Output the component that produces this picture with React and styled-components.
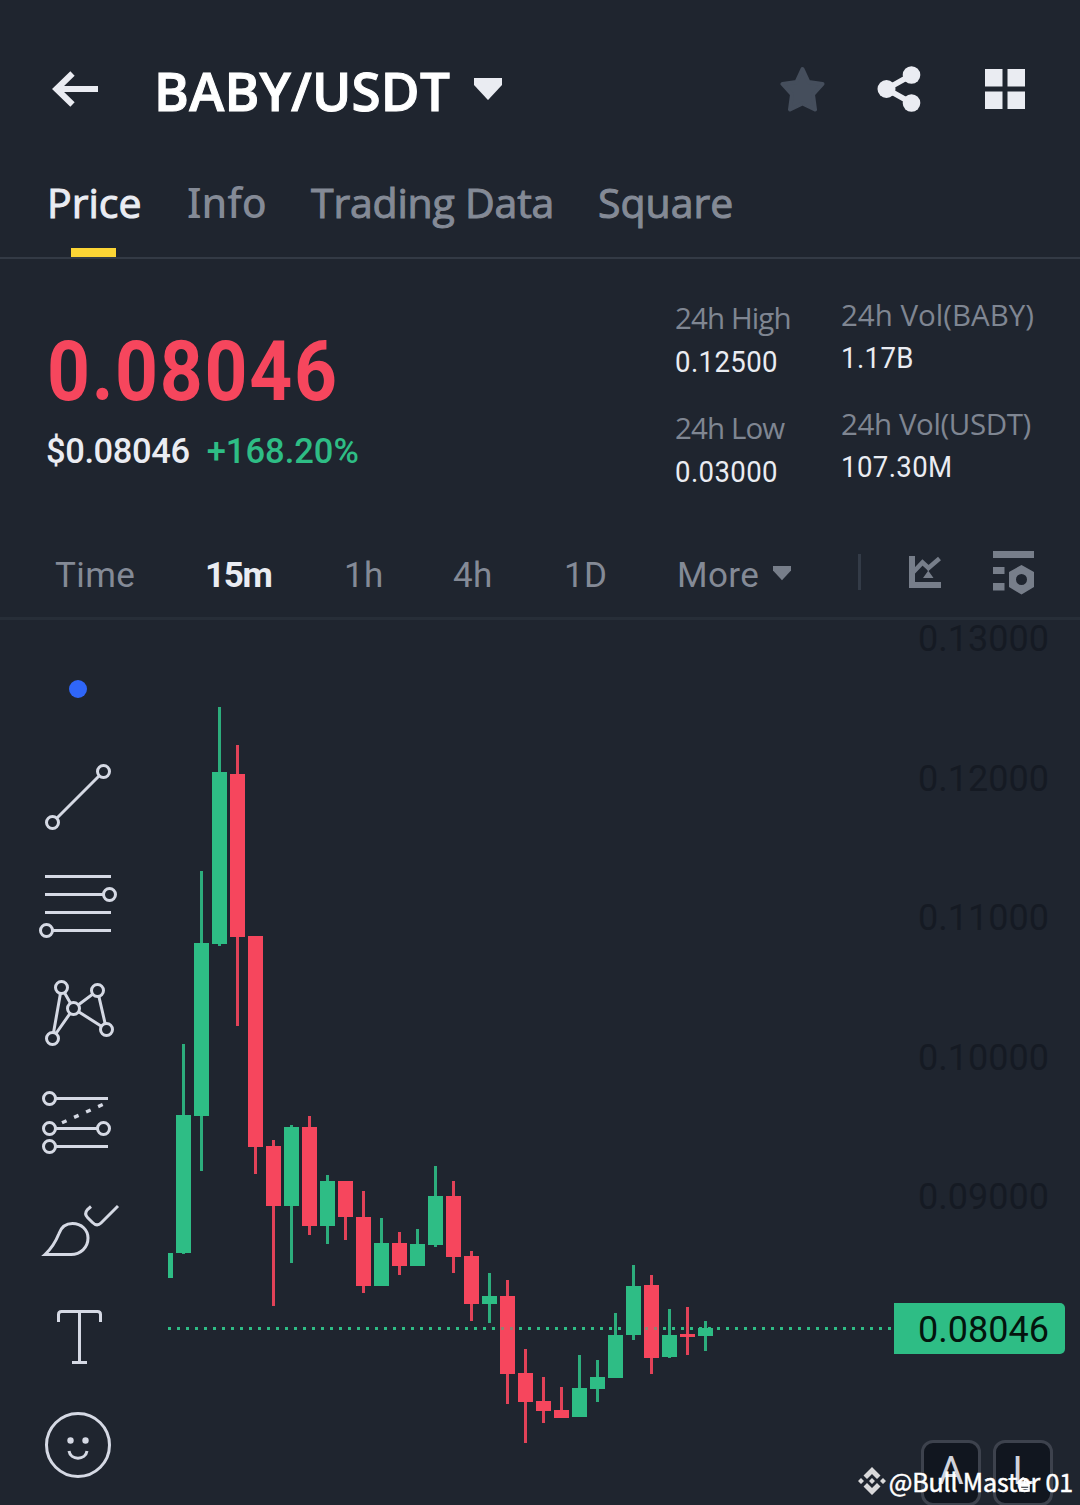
import React from "react";
import styled, { createGlobalStyle } from "styled-components";

const GlobalStyle = createGlobalStyle`
  * {
    box-sizing: border-box;
  }

  body {
    margin: 0;
    background: #1f252f;
  }
`

const Screen = styled.div`
  position: relative;
  display: flex;
  flex-direction: column;
  width: 1080px;
  height: 1505px;
  overflow: hidden;
  background: #1f252f;
  color: #eaecf2;
  font-family: Roboto, "Liberation Sans", sans-serif;
`

const Header = styled.header`
  display: flex;
  align-items: center;
  height: 178px;
  padding: 0 55px 0 52px;
`

const Title = styled.h1`
  width: 297px;
  margin: 0 23px 0 56px;
  padding-top: 3px;
  color: #fff;
  font-family: "Open Sans", "Noto Sans", sans-serif;
  font-size: 53px;
  font-weight: 600;
  line-height: 80px;
  letter-spacing: 0.2px;
  -webkit-text-stroke: 1px #fff;
  white-space: nowrap;
`

const HeaderActions = styled.div`
  display: flex;
  align-items: center;
  gap: 52px;
  margin-left: auto;
`

const Tabs = styled.nav`
  display: flex;
  height: 81px;
  padding-left: 47px;
  border-bottom: 2px solid #333a45;
`

const Tab = styled.div`
  display: flex;
  flex-direction: column;
  width: ${props => props.$width}px;
  color: ${props => props.$active ? '#eaecf2' : '#848a96'};
  font-family: ${props => props.$family || '"Open Sans"'}, "Noto Sans", sans-serif;
  font-size: 41px;
  font-weight: ${props => props.$family ? 500 : 400};
  line-height: 48px;
  letter-spacing: ${props => props.$spacing || 0}px;
  -webkit-text-stroke: ${props => props.$family ? 0 : 1}px;
  white-space: nowrap;
`

const TabMarker = styled.div`
  width: 45px;
  height: 9px;
  margin: 22px 0 0 24px;
  background: #fcd535;
`

const Summary = styled.section`
  display: flex;
  height: 271px;
`

const PriceBlock = styled.div`
  width: 675px;
  padding: 71px 0 0 46px;
`

const LastPrice = styled.div`
  padding-left: 1px;
  color: #f6465d;
  font-size: 84px;
  font-weight: 700;
  line-height: 84px;
  letter-spacing: 1.9px;
  transform: scaleX(0.893);
  transform-origin: left;
`

const PriceRow = styled.div`
  display: flex;
  gap: 17px;
  margin-top: 17px;
  font-size: 34.5px;
  font-weight: 500;
  line-height: 40px;
  letter-spacing: -0.4px;
`

const Change = styled.span`
  color: #2ebd85;
  letter-spacing: 0;
`

const StatColumn = styled.div`
  display: flex;
  flex-direction: column;
  gap: 22px;
  width: ${props => props.$width}px;
  padding-top: ${props => props.$top}px;
`

const StatLabel = styled.div`
  color: #7f8692;
  font-family: "Open Sans", "Noto Sans", sans-serif;
  font-size: 29.5px;
  line-height: 44px;
  letter-spacing: ${props => props.$spacing}px;
  white-space: nowrap;
`

const StatValue = styled.div`
  margin-top: ${props => props.$raise ? -1 : 0}px;
  font-size: 29.5px;
  line-height: 44px;
  letter-spacing: 0.4px;
  transform: scaleX(0.935);
  transform-origin: left;
`

const Intervals = styled.nav`
  display: flex;
  align-items: center;
  height: 90px;
  padding: 0 46px 0 55px;
  border-bottom: 3px solid #272e38;
`

const Interval = styled.div`
  width: ${props => props.$width}px;
  padding-top: 4px;
  color: ${props => props.$active ? '#eaecf2' : '#848a96'};
  font-size: 35px;
  font-weight: ${props => props.$active ? 700 : 400};
  line-height: 44px;
  letter-spacing: ${props => props.$active ? -1.3 : 0.4}px;
  white-space: nowrap;
`

const Divider = styled.div`
  width: 3px;
  height: 36px;
  margin: 0 48px 4px 67px;
  background: #333b47;
`

const ChartTools = styled.div`
  display: flex;
  gap: 52px;
  align-items: center;
  padding-bottom: 1px;
`

const ChartPanel = styled.main`
  display: flex;
  height: 885px;
`

const ToolColumn = styled.aside`
  display: flex;
  flex-direction: column;
  width: 168px;
  padding: 60px 0 0 36px;
`

const ActiveDot = styled.div`
  width: 18px;
  height: 18px;
  margin: 0 0 45px 33px;
  border-radius: 50%;
  background: #2f66f8;
`

const PriceAxis = styled.aside`
  display: flex;
  flex-direction: column;
  width: 186px;
`

const AxisLabel = styled.div`
  flex: none;
  height: 139.6px;
  padding-left: 24px;
  color: #151a23;
  font-size: 36px;
  line-height: 38px;
`

const PriceTag = styled.div`
  flex: none;
  width: 171px;
  height: 51px;
  margin-top: -15px;
  padding-left: 24px;
  border-radius: 0 5px 5px 0;
  background: #2ebd85;
  color: #04130d;
  font-size: 36px;
  line-height: 54px;
`

const ScaleButtons = styled.div`
  display: flex;
  flex: none;
  gap: 12px;
  margin: 86px 0 0 27px;
`

const ScaleButton = styled.div`
  width: 60px;
  height: 66px;
  border: 3px solid #3d424d;
  border-radius: 12px;
  background: #11161f;
  color: #d0d3dc;
  font-size: 39px;
  line-height: 57px;
  text-align: center;
`

const Watermark = styled.div`
  position: absolute;
  right: 7px;
  bottom: 4px;
  display: flex;
  align-items: center;
  gap: 3px;
  color: #fff;
  font-family: "Noto Sans CJK SC", "Noto Sans", sans-serif;
  font-size: 25px;
  line-height: 40px;
  letter-spacing: -0.15px;
  -webkit-text-stroke: 0.5px #fff;
  white-space: nowrap;
`

const WatermarkBadge = styled.svg`
  position: absolute;
  right: 41px;
  bottom: 9px;
`

const LINE = '#d5d9e4';

const tabs = [
  { label: 'Price', width: 140, active: true },
  { label: 'Info', width: 124, family: '"Noto Sans"' },
  { label: 'Trading Data', width: 287, spacing: -0.2 },
  { label: 'Square', width: 150 },
];

const intervals = [
  { label: 'Time', width: 150 },
  { label: '15m', width: 139, active: true },
  { label: '1h', width: 109 },
  { label: '4h', width: 111 },
  { label: '1D', width: 113 },
  { label: 'More', width: 96 },
];

const statColumns = [
  { width: 166, top: 37, items: [['24h High', '0.12500', -0.9], ['24h Low', '0.03000', -0.9]] },
  { width: 239, top: 34, raise: true, items: [['24h Vol(BABY)', '1.17B', 0], ['24h Vol(USDT)', '107.30M', -0.4]] },
];

const axis = ['0.13000', '0.12000', '0.11000', '0.10000', '0.09000'];

// [rising, high, body top, body bottom, low]
const candles = [
  [1, 1044, 1115, 1253, 1254],
  [1, 871, 943, 1116, 1171],
  [1, 707, 772, 944, 946],
  [0, 745, 774, 937, 1026],
  [0, 936, 936, 1147, 1174],
  [0, 1140, 1146, 1206, 1306],
  [1, 1125, 1127, 1206, 1263],
  [0, 1116, 1127, 1226, 1235],
  [1, 1175, 1181, 1226, 1244],
  [0, 1181, 1181, 1217, 1240],
  [0, 1191, 1217, 1286, 1293],
  [1, 1218, 1243, 1286, 1286],
  [0, 1232, 1243, 1266, 1275],
  [1, 1229, 1244, 1266, 1266],
  [1, 1166, 1196, 1245, 1247],
  [0, 1181, 1196, 1257, 1273],
  [0, 1251, 1256, 1304, 1321],
  [1, 1273, 1296, 1304, 1323],
  [0, 1280, 1296, 1374, 1404],
  [0, 1349, 1373, 1402, 1443],
  [0, 1377, 1401, 1411, 1423],
  [0, 1387, 1410, 1418, 1418],
  [1, 1355, 1388, 1417, 1417],
  [1, 1360, 1377, 1389, 1402],
  [1, 1313, 1335, 1378, 1378],
  [1, 1265, 1286, 1335, 1340],
  [0, 1275, 1285, 1358, 1374],
  [1, 1309, 1335, 1357, 1358],
  [0, 1307, 1334, 1337, 1355],
  [1, 1321, 1328, 1336, 1351],
];

const Caret = ({ size, color }) => (
  <svg width={size} height={size * 0.79} viewBox="0 0 28 22" fill={color}>
    <path d="M0 0H28V7L14 22L0 7Z" />
  </svg>
)

const Tool = ({ children }) => (
  <svg width="84" height="108" viewBox="0 0 84 108" fill="none" stroke={LINE} strokeWidth="3">
    {children}
  </svg>
)

const Knob = ({ x, y }) => <circle cx={x} cy={y} r="6" fill="#1f252f" />

const DrawingTools = () => (
  <ToolColumn>
    <ActiveDot />
    <Tool>
      <path d="M16.5 79.5L67.5 28.5" />
      <Knob x={16.5} y={79.5} />
      <Knob x={67.5} y={28.5} />
    </Tool>
    <Tool>
      <path d="M9 25.5H75M9 43.5H75M9 61.5H75M9 79.5H75" />
      <Knob x={73.5} y={43.5} />
      <Knob x={10.5} y={79.5} />
    </Tool>
    <Tool>
      <path d="M16.5 79.5L25.5 28.5L37.5 49.5L16.5 79.5M37.5 49.5L61.5 31.5L70.5 70.5L37.5 49.5" />
      <Knob x={25.5} y={28.5} />
      <Knob x={61.5} y={31.5} />
      <Knob x={37.5} y={49.5} />
      <Knob x={16.5} y={79.5} />
      <Knob x={70.5} y={70.5} />
    </Tool>
    <Tool>
      <path d="M13.5 31.5H72M13.5 61.5H67.5M13.5 79.5H72" />
      <path d="M26 55.8L67.5 37.2" strokeDasharray="5 8.2" strokeWidth="3.4" />
      <Knob x={13.5} y={31.5} />
      <Knob x={13.5} y={61.5} />
      <Knob x={67.5} y={61.5} />
      <Knob x={13.5} y={79.5} />
    </Tool>
    <Tool>
      <path d="M9 79.5C15 74 20 66 23 58.5C25.5 51.5 30 48.5 36.5 48.5C45.5 48.5 52 55 52 63C52 72.5 44.5 79.5 35 79.5Z" />
      <path d="M55 31.5L51.5 34.5C49 37.5 49 40 51.5 42.5L56.5 47.5C59.5 50.5 62.5 50.5 65 48L82 31" />
    </Tool>
    <Tool>
      <path d="M22.5 39V31.5Q22.5 28.5 25.5 28.5H61.5Q64.5 28.5 64.5 31.5V39M43.5 28.5V79M36 79.5H51" />
    </Tool>
    <Tool>
      <circle cx="42" cy="54" r="31.5" />
      <circle cx="34.5" cy="49.5" r="3.2" fill={LINE} stroke="none" />
      <circle cx="49.5" cy="49.5" r="3.2" fill={LINE} stroke="none" />
      <path d="M33 60C34.5 69.5 49.5 69.5 51 60" />
    </Tool>
  </ToolColumn>
)

const Candles = () => (
  <svg width="726" height="885" viewBox="168 620 726 885">
    <path d="M168 1328.5H894" stroke="#2ebd85" strokeWidth="3" strokeDasharray="3 6" />
    <rect x="168" y="1253" width="5" height="25" fill="#2ebd85" />
    {candles.map(([rising, high, top, bottom, low], index) => {
      const x = 176 + index * 18;
      return (
        <g key={index.toString()} fill={rising ? '#2ebd85' : '#f6465d'}>
          <rect x={x + 6} y={high} width="3" height={low - high} opacity="0.9" />
          <rect x={x} y={top} width="15" height={bottom - top} />
        </g>
      )
    })}
    <path d="M168 1328.5H894" stroke="#2ebd85" strokeWidth="3" strokeDasharray="3 6" opacity="0.5" />
  </svg>
)

const App = () => (
  <Screen>
    <GlobalStyle />
    <Header>
      <svg width="46" height="36" viewBox="0 0 46 36" fill="none" stroke="#eaecf2" strokeWidth="6.2">
        <path d="M46 18H5M20.5 2.5L4.5 18L20.5 33.5" />
      </svg>
      <Title>BABY/USDT</Title>
      <Caret size={28} color="#eaecf2" />
      <HeaderActions>
        <svg width="45" height="46" viewBox="0 0 45 46" fill="#454e5c" stroke="#454e5c" strokeWidth="4" strokeLinejoin="round">
          <path d="M22.5 3L28.5 16L42.5 18L33 28.5L35 43.5L22.5 37.5L10 43.5L12 28.5L2.5 18L16.5 16Z" />
        </svg>
        <svg width="44" height="46" viewBox="0 0 44 46" fill="#eaecf2">
          <path d="M34.5 9L9.5 23L34.5 37" fill="none" stroke="#eaecf2" strokeWidth="5.5" />
          <circle cx="34.5" cy="9" r="8.8" />
          <circle cx="9.5" cy="23" r="9" />
          <circle cx="34.5" cy="37" r="8.8" />
        </svg>
        <svg width="52" height="40" viewBox="-12 0 52 40" fill="#eaecf2">
          <path d="M0 0H17.5V17.5H0ZM22.5 0H40V17.5H22.5ZM0 22.5H17.5V40H0ZM22.5 22.5H40V40H22.5Z" />
        </svg>
      </HeaderActions>
    </Header>
    <Tabs>
      {tabs.map(tab => (
        <Tab key={tab.label} $width={tab.width} $active={tab.active} $family={tab.family} $spacing={tab.spacing}>
          {tab.label}
          {tab.active && <TabMarker />}
        </Tab>
      ))}
    </Tabs>
    <Summary>
      <PriceBlock>
        <LastPrice>0.08046</LastPrice>
        <PriceRow>
          <span>$0.08046</span>
          <Change>+168.20%</Change>
        </PriceRow>
      </PriceBlock>
      {statColumns.map((column, index) => (
        <StatColumn key={index.toString()} $width={column.width} $top={column.top}>
          {column.items.map(([label, value, spacing]) => (
            <div key={label}>
              <StatLabel $spacing={spacing}>{label}</StatLabel>
              <StatValue $raise={column.raise}>{value}</StatValue>
            </div>
          ))}
        </StatColumn>
      ))}
    </Summary>
    <Intervals>
      {intervals.map(item => (
        <Interval key={item.label} $width={item.width} $active={item.active}>{item.label}</Interval>
      ))}
      <Caret size={18} color="#777e8a" />
      <Divider />
      <ChartTools>
        <svg width="32" height="34" viewBox="0 0 32 34" fill="none" stroke="#777e8a">
          <path d="M3 0V29H32" strokeWidth="6" />
          <path d="M4 16.5L13.5 6.5L19.5 12L30.5 2.5" strokeWidth="4.5" />
          <path d="M16.5 11H22L19.5 15L24.5 22H14L19 15Z" fill="#777e8a" stroke="none" />
        </svg>
        <svg width="41" height="44" viewBox="0 0 41 44" fill="#777e8a">
          <path d="M0 0H41V7H0ZM0 16H11.5V23H0ZM0 32H11.5V39.5H0Z" />
          <path fillRule="evenodd" d="M28.5 14L41 21V36L28.5 43.5L16 36V21ZM28.5 23A5.5 5.5 0 1 0 28.5 34A5.5 5.5 0 1 0 28.5 23Z" />
        </svg>
      </ChartTools>
    </Intervals>
    <ChartPanel>
      <DrawingTools />
      <Candles />
      <PriceAxis>
        {axis.map(price => <AxisLabel key={price}>{price}</AxisLabel>)}
        <PriceTag>0.08046</PriceTag>
        <ScaleButtons>
          <ScaleButton>A</ScaleButton>
          <ScaleButton>L</ScaleButton>
        </ScaleButtons>
      </PriceAxis>
    </ChartPanel>
    <Watermark>
      <svg width="28" height="28" viewBox="0 0 28 28" fill="#d9d9da">
        <path d="M14 0L22.5 8.5L19 12L14 7L9 12L5.5 8.5ZM14 28L5.5 19.5L9 16L14 21L19 16L22.5 19.5ZM3 11L6 14L3 17L0 14ZM25 11L28 14L25 17L22 14ZM14 11L17 14L14 17L11 14Z" />
      </svg>
      <span>@Bull Master 01</span>
      <WatermarkBadge width="15" height="15" viewBox="0 0 15 15" fill="none" stroke="#fff" strokeWidth="1.6">
        <path d="M1 5L6 1L11 5M0 6H14M3 9H12V14H3ZM3 11.5H12M7.5 3V9" />
      </WatermarkBadge>
    </Watermark>
  </Screen>
)

export default App
